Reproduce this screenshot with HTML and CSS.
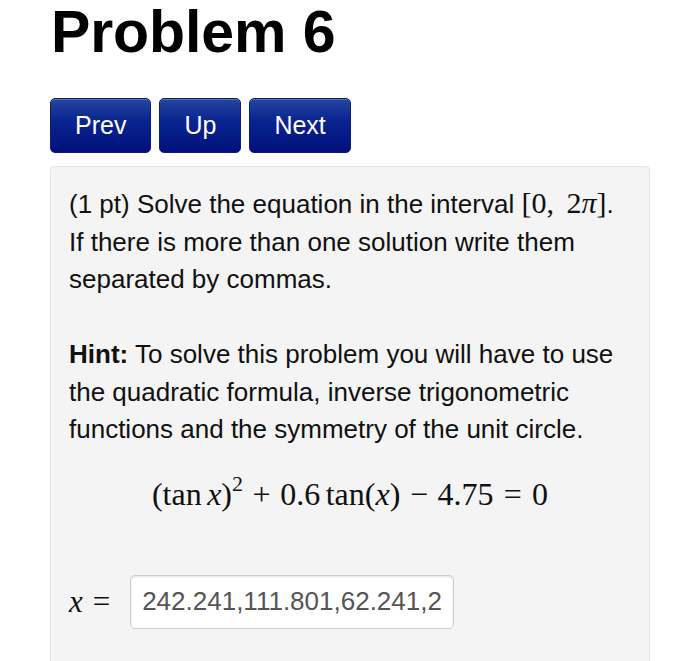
FILE: index.html
```html
<!DOCTYPE html>
<html>
<head>
<meta charset="utf-8">
<link rel="stylesheet" href="styles.css">
</head>
<body>
<div class="page">
  <h1 class="title">Problem 6</h1>
  <div class="nav">
    <a class="btn">Prev</a>
    <a class="btn">Up</a>
    <a class="btn">Next</a>
  </div>
  <div class="problem">
    <p class="para">(1 pt) Solve the equation in the interval <span class="math">[0,<span class="thin"></span> 2<i>π</i>]</span>. If there is more than one solution write them separated by commas.</p>
    <p class="para hint"><b>Hint:</b> To solve this problem you will have to use the quadratic formula, inverse trigonometric functions and the symmetry of the unit circle.</p>
    <div class="equation">(tan<span class="thin"></span><i>x</i>)<sup>2</sup><span class="bin">+</span>0.6<span class="thin"></span>tan(<i>x</i>)<span class="bin">−</span>4.75<span class="rel">=</span>0</div>
    <div class="answer">
      <span class="var"><i>x</i><span class="rel">=</span></span>
      <div class="input">242.241,111.801,62.241,2</div>
    </div>
  </div>
</div>
</body>
</html>
```
FILE: styles.css
```css
html, body {
  margin: 0;
  padding: 0;
  background: #fff;
}
.page {
  padding: 0 0 0 50px;
  width: 600px;
  font-family: "Liberation Sans", Arial, sans-serif;
  color: #111;
}
.title {
  margin: 0;
  padding: 0 0 0 1px;
  font-size: 59px;
  font-weight: bold;
  line-height: 64px;
  letter-spacing: -0.1px;
  color: #000;
}
.nav {
  display: flex;
  gap: 8px;
  margin-top: 34px;
}
.btn {
  display: flex;
  align-items: center;
  justify-content: center;
  height: 53px;
  padding: 0 24px;
  border: 1px solid #0b1f6e;
  border-radius: 5px;
  background: linear-gradient(#24469f, #0a2590 40%, #00107c);
  color: #fff;
  font-size: 25px;
  box-shadow: inset 0 1px 0 rgba(255,255,255,0.25);
}
.problem {
  margin-top: 13px;
  height: 500px;
  background: #f4f4f4;
  border: 1px solid #e4e4e4;
  border-radius: 4px;
  padding: 17px 18px 0;
  box-sizing: border-box;
  width: 600px;
}
.para {
  margin: 0;
  font-size: 26px;
  line-height: 37.5px;
}
.hint {
  margin-top: 37.5px;
}
.math {
  font-family: "Liberation Serif", "Times New Roman", serif;
  font-size: 30px;
}
.thin {
  display: inline-block;
  width: 0.17em;
}
.bin {
  margin: 0 0.3em;
}
.rel {
  margin: 0 0.32em;
}
.equation {
  text-align: center;
  font-family: "Liberation Serif", "Times New Roman", serif;
  font-size: 32px;
  margin-top: 24px;
  line-height: 42px;
}
.equation sup {
  font-size: 22px;
  line-height: 0;
  vertical-align: 14px;
}
.answer {
  display: flex;
  align-items: center;
  margin-top: 60px;
  gap: 20px;
}
.var {
  font-family: "Liberation Serif", "Times New Roman", serif;
  font-size: 31px;
}
.var .rel {
  margin-right: 0;
}
.input {
  width: 324px;
  height: 54px;
  box-sizing: border-box;
  background: #fff;
  border: 1px solid #ccc;
  border-radius: 5px;
  box-shadow: inset 0 1px 2px rgba(0,0,0,0.12);
  padding: 0 0 0 11px;
  display: flex;
  align-items: center;
  overflow: hidden;
  white-space: nowrap;
  font-size: 26px;
  color: #555;
}
```
